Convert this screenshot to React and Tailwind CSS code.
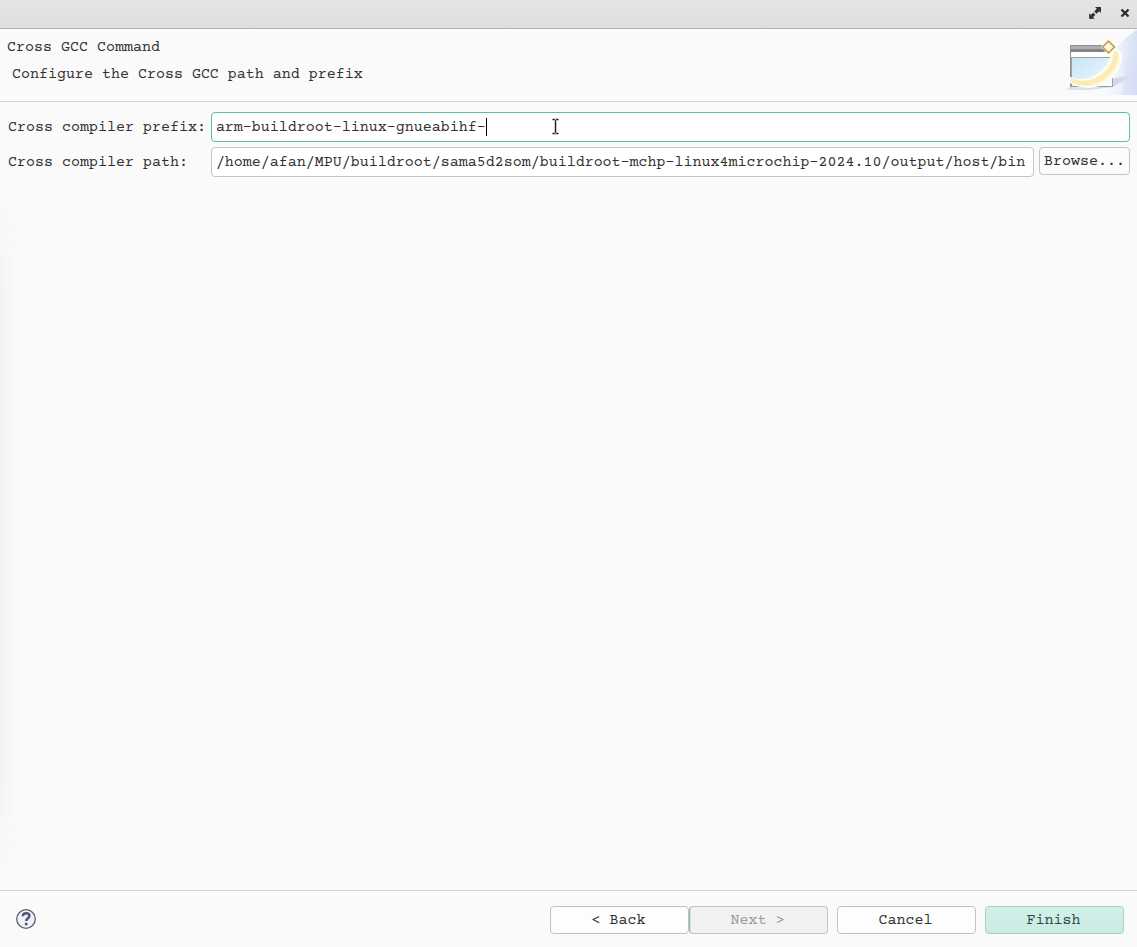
import { useState } from 'react';

const BTN = 'h-7 w-[139px] rounded border pt-0.5 pr-0.5 text-center';

function BannerIcon() {
    return (
        <svg width="71" height="66" viewBox="0 0 71 66" aria-hidden="true">
            <defs>
                <linearGradient id="sky" x1="0" y1="0" x2="1" y2="0">
                    <stop offset="0" stopColor="#fafafd" />
                    <stop offset="0.5" stopColor="#eaeffa" />
                    <stop offset="1" stopColor="#d5def4" />
                </linearGradient>
                <linearGradient id="ray" x1="0" y1="0" x2="1" y2="1">
                    <stop offset="0" stopColor="#e2e8f8" />
                    <stop offset="1" stopColor="#d3dcf4" />
                </linearGradient>
                <linearGradient id="pane" x1="0" y1="0" x2="1" y2="1">
                    <stop offset="0" stopColor="#c6e5f7" />
                    <stop offset="0.6" stopColor="#e0f1fb" />
                    <stop offset="1" stopColor="#ffffff" />
                </linearGradient>
                <linearGradient id="floor" x1="0" y1="0" x2="1" y2="0">
                    <stop offset="0" stopColor="#e4e4ec" />
                    <stop offset="0.7" stopColor="#d2d6e6" />
                    <stop offset="1" stopColor="#dce3f5" />
                </linearGradient>
            </defs>
            <path d="M71 1C62 6 54 13 48 22L40 66H71Z" fill="url(#sky)" />
            <path d="M71 8C63 18 58 34 56 66H71Z" fill="url(#ray)" opacity="0.7" />
            <path d="M0 61L6 56L46 50L69 45L47 58L22 61Z" fill="url(#floor)" />
            <rect x="4.500" y="16.500" width="42" height="41" fill="#fff" stroke="#8c9297" />
            <rect x="5" y="17" width="41" height="3" fill="#b0b0b0" />
            <rect x="5" y="20" width="41" height="3" fill="#858585" />
            <rect x="5.500" y="28.500" width="41" height="29" fill="url(#pane)" stroke="#95a5a8" />
            <path d="M4 49C14 53 25 51 34 44C42 37 46 31 46 22C50 18 55 23 55 29C54 39 48 48 40 53C29 60 14 59 4 53Z" fill="#fff7d6" stroke="#fffdf2" strokeWidth="2" />
            <path d="M7 52C18 56 29 54 38 47C46 41 50 34 50 25" fill="none" stroke="#f8e8ac" strokeWidth="5" strokeLinecap="round" opacity="0.75" />
            <path d="M42.500 10L50 18L42.500 26L35 18Z" fill="#fffdf3" />
            <path d="M42.500 12L48.500 18L42.500 24L36.500 18Z" fill="#ffedbd" stroke="#bd9850" strokeWidth="1.500" />
            <path d="M42.500 14.500L46 18L42.500 21.500L39 18Z" fill="#fffbea" />
        </svg>
    );
}

export default function App() {
    const [prefix, setPrefix] = useState('arm-buildroot-linux-gnueabihf-');
    const [path, setPath] = useState('/home/afan/MPU/buildroot/sama5d2som/buildroot-mchp-linux4microchip-2024.10/output/host/bin');

    return (
        <div className="flex min-h-screen flex-col bg-[#fafafa] font-['Courier_Prime','Liberation_Mono',monospace] text-[15px] leading-5 text-[#303030]">
            {/* Title bar */}
            <div className="flex h-[29px] items-center justify-end gap-4 border-b border-[#b2b2b2] bg-linear-to-b from-[#e5e5e5] to-[#dedede] pr-[5px] pb-0.5">
                <button type="button" aria-label="Maximize">
                    <svg width="14" height="14" viewBox="0 0 14 14" fill="#303030">
                        <path d="M7 1H13V7L11.200 5.200L8.500 7.700L6.300 5.500L8.800 2.800Z" />
                        <path d="M7 13H1V7L2.800 8.800L5.300 6.500L7.500 8.700L5.200 11.200Z" stroke="#e1e1e1" strokeWidth="0.300" />
                    </svg>
                </button>
                <button type="button" aria-label="Close">
                    <svg width="14" height="14" viewBox="0 0 14 14" stroke="#303030" strokeWidth="2.400">
                        <path d="M3.500 3.500L10.500 10.500M10.500 3.500L3.500 10.500" />
                    </svg>
                </button>
            </div>

            {/* Wizard header */}
            <header className="flex h-[73px] items-start justify-between border-b border-[#d2d2d2]">
                <div className="flex flex-col gap-[7px] pt-[9px] pl-[7px]">
                    <h1>Cross GCC Command</h1>
                    <p className="pl-[5px]">Configure the Cross GCC path and prefix</p>
                </div>
                <BannerIcon />
            </header>

            <main className="relative flex-1 pt-2.5 pr-[7px] pl-2">
                <div className="pointer-events-none absolute top-24 bottom-4 left-0 w-4 bg-linear-to-r from-[#f2f2f2] to-[#fafafa] mask-y-from-85% mask-y-to-100%" />
                <form className="grid grid-cols-[auto_1fr_auto] gap-[5px]">
                    <label htmlFor="prefix" className="self-center pt-0.5">Cross compiler prefix:</label>
                    <div className="relative col-span-2">
                        <input
                            id="prefix"
                            value={prefix}
                            onChange={e => setPrefix(e.target.value)}
                            className="h-[30px] w-full rounded border border-[#5bbda5] bg-white px-1 caret-transparent outline-none"
                        />
                        {/* Caret and pointer */}
                        <span className="absolute top-1.5 left-[275px] h-[18px] w-px bg-black" />
                        <svg className="absolute top-1.5 left-[340px]" width="9" height="17" viewBox="0 0 9 17" fill="none" aria-hidden="true">
                            <path d="M1.500 1.500H3.500L4.500 2.500L5.500 1.500H7.500M4.500 2.500V14.500M1.500 15.500H3.500L4.500 14.500L5.500 15.500H7.500" stroke="#b8b8b8" strokeWidth="2.500" />
                            <path d="M1.500 1.500H3.500L4.500 2.500L5.500 1.500H7.500M4.500 2.500V14.500M1.500 15.500H3.500L4.500 14.500L5.500 15.500H7.500" stroke="#202020" />
                        </svg>
                    </div>
                    <label htmlFor="path" className="self-center pt-0.5">Cross compiler path:</label>
                    <input
                        id="path"
                        value={path}
                        onChange={e => setPath(e.target.value)}
                        className="h-[30px] w-full rounded border border-[#c4c4c4] bg-white px-1 outline-none"
                    />
                    <button type="button" className="h-7 w-[91px] rounded border border-[#c4c4c4] bg-[#fcfcfc] pt-0.5 text-center">Browse...</button>
                </form>
            </main>

            {/* Button bar */}
            <footer className="flex items-center justify-between border-t border-[#d2d2d2] pt-[15px] pr-[13px] pb-[13px] pl-4">
                <button type="button" aria-label="Help" className="pb-0.5">
                    <svg width="20" height="20" viewBox="0 0 20 20" fill="none">
                        <circle cx="10" cy="10" r="9.300" fill="#f0f2f6" stroke="#5b6072" strokeWidth="1.300" />
                        <path d="M6.800 7.300C6.900 5 8.300 4.200 10.200 4.200C12.200 4.200 13.400 5.300 13.400 6.900C13.400 9.200 10.200 9.300 10.200 12" stroke="#515775" strokeWidth="2.500" />
                        <circle cx="10.200" cy="15" r="1.500" fill="#515775" />
                    </svg>
                </button>
                <div className="flex gap-[9px]">
                    <div className="flex">
                        <button type="button" className={`${BTN} border-[#c2c2c2] bg-[#fdfdfd]`}>&lt; Back</button>
                        <button type="button" disabled className={`${BTN} border-[#c4c4c4] border-l-[#8fbcb0] bg-[#f2f2f2] text-[#9a9a9a] shadow-[inset_1px_0_0_#c5e9df]`}>Next &gt;</button>
                    </div>
                    <button type="button" className={`${BTN} border-[#c2c2c2] bg-[#fdfdfd]`}>Cancel</button>
                    <button type="button" className={`${BTN} border-[#9fd4c6] bg-linear-to-b from-[#d3f0e8] to-[#c8ebe2] text-[#2c4a42]`}>Finish</button>
                </div>
            </footer>
        </div>
    );
}
